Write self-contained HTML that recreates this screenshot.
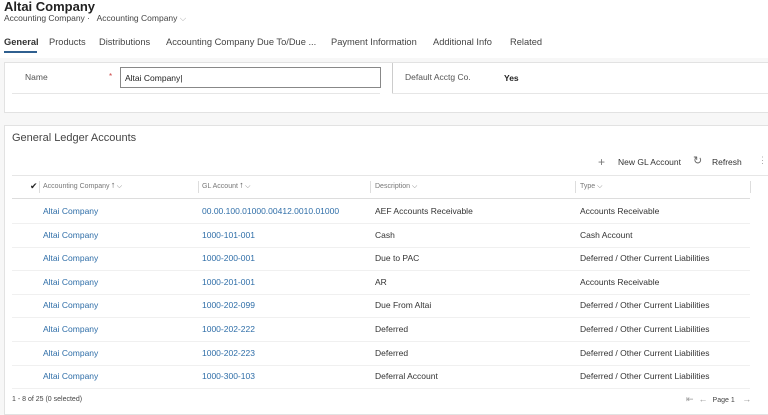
<!DOCTYPE html><html><head><style>
*{margin:0;padding:0;box-sizing:border-box}
body{width:768px;height:411px;overflow:hidden;background:#f7f7f7;font-family:"Liberation Sans",sans-serif;color:#333;position:relative}
.a{position:absolute;white-space:nowrap}
.top{position:absolute;left:0;top:0;width:768px;height:58px;background:#fff}
.card{position:absolute;background:#fff;border:1px solid #e2e2e2}
.lnk{color:#2f6ea8}
.hl{position:absolute;height:1px;background:#e6e6e6}
.vl{position:absolute;width:1px;background:#ddd}
.t{top:37px;font-size:9.3px;color:#444}
</style></head><body>
<div class="top"></div>
<div class="a" style="left:4px;top:-1px;font-size:13px;font-weight:bold;color:#222">Altai Company</div>
<div class="a" style="left:4px;top:13px;font-size:8.5px;color:#444">Accounting Company ·&nbsp;&nbsp; Accounting Company <span style="color:#aaa">⌵</span></div>
<div class="a t" style="left:4px;color:#333;font-weight:bold">General</div>
<div style="position:absolute;left:4px;top:51px;width:33px;height:2px;background:#2f5f8f"></div>
<div class="a t" style="left:49px">Products</div>
<div class="a t" style="left:99px">Distributions</div>
<div class="a t" style="left:166px">Accounting Company Due To/Due ...</div>
<div class="a t" style="left:331px">Payment Information</div>
<div class="a t" style="left:433px">Additional Info</div>
<div class="a t" style="left:510px">Related</div>

<div class="card" style="left:4px;top:62px;width:766px;height:51px"></div>
<div class="a" style="left:25px;top:72px;font-size:8.5px;color:#555">Name</div>
<div class="a" style="left:109px;top:72px;font-size:8px;color:#c44">*</div>
<div class="a" style="left:120px;top:67px;width:261px;height:21px;border:1px solid #888;background:#fff;font-size:8.5px;padding:5px 0 0 4px;color:#222">Altai Company|</div>
<div class="hl" style="left:12px;top:93px;width:368px"></div>
<div class="vl" style="left:392px;top:63px;height:30px;background:#ccc"></div>
<div class="a" style="left:405px;top:72px;font-size:8.5px;color:#555">Default Acctg Co.</div>
<div class="a" style="left:504px;top:73px;font-size:8.5px;font-weight:bold;color:#222">Yes</div>
<div class="hl" style="left:392px;top:93px;width:376px"></div>

<div class="card" style="left:4px;top:125px;width:766px;height:290px"></div>
<div class="a" style="left:12px;top:132px;font-size:11px;color:#444">General Ledger Accounts</div>
<div class="a" style="left:598px;top:155px;font-size:12px;color:#777">+</div>
<div class="a" style="left:618px;top:157px;font-size:8.5px;color:#333">New GL Account</div>
<div class="a" style="left:693px;top:154px;font-size:11px;color:#666">↻</div>
<div class="a" style="left:712px;top:157px;font-size:8.5px;color:#333">Refresh</div>
<div class="a" style="left:758px;top:155px;font-size:9px;color:#aaa">⋮</div>
<div class="hl" style="left:12px;top:175px;width:756px"></div>
<div class="a" style="left:30px;top:181px;font-size:9px;color:#222">✔</div>
<div class="vl" style="left:39px;top:181px;height:12px"></div>
<div class="a" style="left:43px;top:183px;font-size:7px;color:#777">Accounting Company ⭡ ⌵</div>
<div class="vl" style="left:198px;top:181px;height:12px"></div>
<div class="a" style="left:202px;top:183px;font-size:7px;color:#777">GL Account ⭡ ⌵</div>
<div class="vl" style="left:370px;top:181px;height:12px"></div>
<div class="a" style="left:375px;top:183px;font-size:7px;color:#777">Description ⌵</div>
<div class="vl" style="left:575px;top:181px;height:12px"></div>
<div class="a" style="left:580px;top:183px;font-size:7px;color:#777">Type ⌵</div>
<div class="vl" style="left:750px;top:181px;height:12px"></div>
<div class="hl" style="left:12px;top:198px;width:738px;background:#ddd"></div>

<div id="rows"></div>
<div class="a" style="left:12px;top:396px;font-size:7px;color:#444">1 - 8 of 25 (0 selected)</div>
<div class="a" style="left:686px;top:394px;font-size:9px;color:#999">⇤ &nbsp;← &nbsp;<span style="font-size:7px;color:#444">Page 1</span> &nbsp;&nbsp;→</div>
<script>
var d=[["00.00.100.01000.00412.0010.01000","AEF Accounts Receivable","Accounts Receivable"],["1000-101-001","Cash","Cash Account"],["1000-200-001","Due to PAC","Deferred / Other Current Liabilities"],["1000-201-001","AR","Accounts Receivable"],["1000-202-099","Due From Altai","Deferred / Other Current Liabilities"],["1000-202-222","Deferred","Deferred / Other Current Liabilities"],["1000-202-223","Deferred","Deferred / Other Current Liabilities"],["1000-300-103","Deferral Account","Deferred / Other Current Liabilities"]];
var h="";d.forEach(function(r,i){var y=206+i*23.6;
h+='<div class="a lnk" style="left:43px;top:'+y+'px;font-size:8.5px">Altai Company</div><div class="a lnk" style="left:202px;top:'+y+'px;font-size:8.5px">'+r[0]+'</div><div class="a" style="left:375px;top:'+y+'px;font-size:8.5px">'+r[1]+'</div><div class="a" style="left:580px;top:'+y+'px;font-size:8.5px">'+r[2]+'</div><div class="hl" style="left:12px;top:'+(y+17)+'px;width:738px;background:#f0f0f0"></div>';});
document.getElementById("rows").outerHTML=h;
</script>
</body></html>
